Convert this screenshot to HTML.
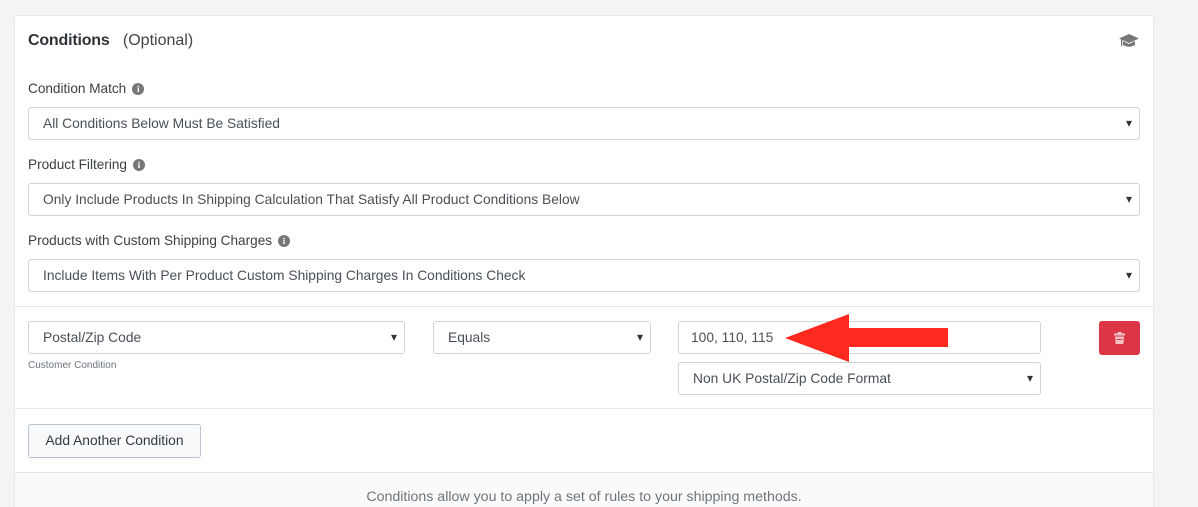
<!DOCTYPE html>
<html><head><meta charset="utf-8"><style>
*{box-sizing:border-box;margin:0;padding:0}
html,body{width:1198px;height:507px;overflow:hidden}
body{background:#f3f4f6;font-family:"Liberation Sans",sans-serif;color:#343a40;position:relative;font-size:13.8px}
.card{position:absolute;left:14px;top:15px;width:1140px;height:492px;background:#fff;border:1px solid #e6e8eb;border-bottom:none;border-radius:3px 3px 0 0;overflow:hidden}
.abs{position:absolute}
.lbl{font-size:13.6px;color:#3a3f44}
.info{display:inline-block;width:12px;height:12px;border-radius:50%;background:#777;color:#fff;font-size:9px;font-weight:bold;text-align:center;line-height:12px;vertical-align:1px;margin-left:6px;font-family:"Liberation Serif",serif}
.sel{position:absolute;height:33px;border:1px solid #ced4da;border-radius:3px;background:#fff;padding-left:14px;line-height:31px;font-size:13.8px;color:#495057}
.sel:after{content:"▾";position:absolute;right:7px;top:0;font-size:12px;color:#333}
.inp{position:absolute;height:33px;border:1px solid #ced4da;border-radius:3px;background:#fff;padding-left:12px;line-height:31px;font-size:13.8px;color:#495057}
.hr{position:absolute;left:0;width:1138px;height:1px;background:#e3e6ea}
</style></head><body>
<div class="card">
<div class="abs" style="left:13px;top:16px;font-size:16px;color:#2d3338"><span style="font-weight:600;letter-spacing:-0.2px">Conditions</span>&nbsp;&nbsp;&nbsp;<span style="color:#444">(Optional)</span></div>
<svg class="abs" style="left:1103px;top:17px" width="22" height="16" viewBox="0 0 22 16"><path d="M11 1 L21 5.5 L11 10 L1 5.5Z" fill="#777"/><path d="M5 8 V12 Q11 15.5 17 12 V8 L11 11 Z" fill="#777"/><rect x="3" y="6" width="1.3" height="7" fill="#777"/></svg>
<div class="abs lbl" style="left:13px;top:65px">Condition Match<span class="info">i</span></div>
<div class="sel" style="left:13px;top:91px;width:1112px">All Conditions Below Must Be Satisfied</div>
<div class="abs lbl" style="left:13px;top:141px">Product Filtering<span class="info">i</span></div>
<div class="sel" style="left:13px;top:167px;width:1112px">Only Include Products In Shipping Calculation That Satisfy All Product Conditions Below</div>
<div class="abs lbl" style="left:13px;top:217px">Products with Custom Shipping Charges<span class="info">i</span></div>
<div class="sel" style="left:13px;top:243px;width:1112px">Include Items With Per Product Custom Shipping Charges In Conditions Check</div>
<div class="hr" style="top:290px"></div>
<div class="sel" style="left:13px;top:305px;width:377px">Postal/Zip Code</div>
<div class="abs" style="left:13px;top:344px;font-size:10px;color:#6c757d">Customer Condition</div>
<div class="sel" style="left:418px;top:305px;width:218px">Equals</div>
<div class="inp" style="left:663px;top:305px;width:363px">100, 110, 115</div>
<div class="sel" style="left:663px;top:346px;width:363px">Non UK Postal/Zip Code Format</div>
<div class="abs" style="left:1084px;top:305px;width:41px;height:34px;background:#dc3545;border-radius:3px"><svg style="position:absolute;left:15px;top:11px" width="11" height="12" viewBox="0 0 11 12"><rect x="0" y="1.5" width="11" height="2" fill="#f5c2c7"/><rect x="3.5" y="0" width="4" height="2" fill="#f5c2c7"/><path d="M1 4.5 H10 L9.3 12 H1.7Z" fill="#f5c2c7"/><rect x="2.5" y="7" width="6" height="1" fill="#dc3545"/></svg></div>
<div class="hr" style="top:392px"></div>
<div class="abs" style="left:13px;top:408px;width:173px;height:34px;border:1px solid #b8c4d0;border-radius:3px;background:#f8f9fa;line-height:32px;text-align:center;font-size:13.8px;color:#343a40">Add Another Condition</div>
<div class="abs" style="left:0;top:456px;width:1138px;height:36px;background:#fafafa;border-top:1px solid #e3e6ea"></div>
<div class="abs" style="left:0;top:473px;width:1138px;text-align:center;font-size:14.2px;line-height:16px;color:#6c757d">Conditions allow you to apply a set of rules to your shipping methods.</div>
</div>
<svg class="abs" style="left:0;top:0" width="1198" height="507"><polygon points="785,338 849,314 849,328 948,328 948,347 849,347 849,362" fill="#ff2a1f"/></svg>
</body></html>
